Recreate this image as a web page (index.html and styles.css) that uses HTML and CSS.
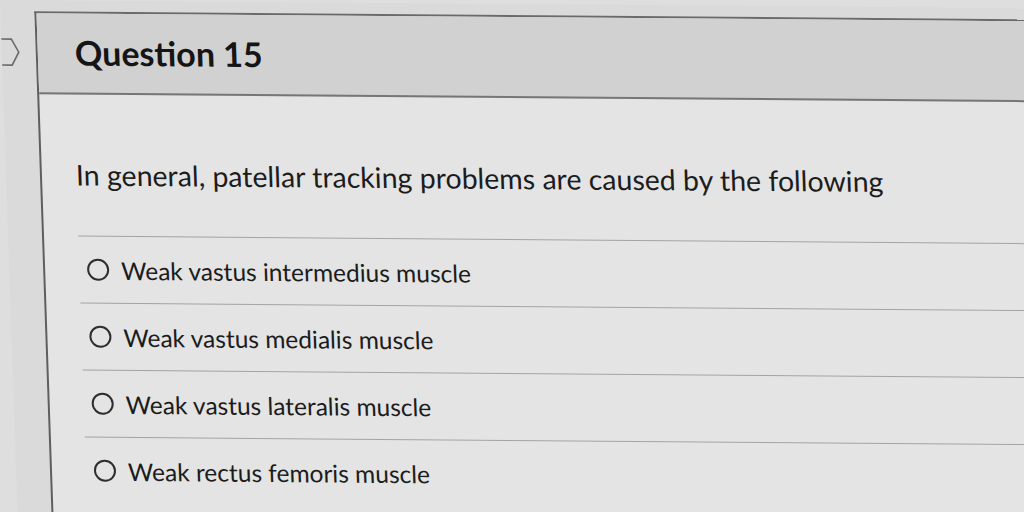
FILE: index.html
```html
<!DOCTYPE html>
<html lang="en">
<head>
<meta charset="utf-8">
<title>Question 15</title>
<link rel="stylesheet" href="styles.css">
</head>
<body>
<div class="page">
  <div class="gutter">
    <svg class="flag" width="20" height="32" viewBox="0 0 20 32" aria-hidden="true">
      <path d="M-4 2 H10 L17 15 L10 28 H-4" fill="none" stroke="#6b6b6b" stroke-width="1.6" stroke-linejoin="miter"/>
    </svg>
  </div>
  <section class="card">
    <header class="card-header">
      <h2 class="card-title">Question 15</h2>
    </header>
    <div class="card-body">
      <p class="question-text">In general, patellar tracking problems are caused by the following</p>
      <ul class="options">
        <li class="option"><span class="radio"></span><span class="option-label">Weak vastus intermedius muscle</span></li>
        <li class="option"><span class="radio"></span><span class="option-label">Weak vastus medialis muscle</span></li>
        <li class="option"><span class="radio"></span><span class="option-label">Weak vastus lateralis muscle</span></li>
        <li class="option"><span class="radio"></span><span class="option-label">Weak rectus femoris muscle</span></li>
      </ul>
    </div>
  </section>
</div>
</body>
</html>
```

FILE: styles.css
```css
html, body {
  margin: 0;
  padding: 0;
  height: 100%;
  overflow: hidden;
  background: #dedede;
  font-family: "Lato", "Open Sans", sans-serif;
  color: #1c1c1c;
}

.page {
  display: flex;
  width: 1120px;
  height: 600px;
  padding-top: 11px;
  box-sizing: border-box;
  background: #dadada;
  transform: matrix(1, 0.008, 0.034, 1, 0, 0);
  transform-origin: 0 0;
}

.gutter {
  flex: none;
  width: 34px;
}

.flag {
  display: block;
  margin-top: 26px;
}

.card {
  flex: 1;
  background: #e4e4e4;
  border-left: 2px solid #5e5e5e;
  border-top: 2px solid #6a6a6a;
}

.card-header {
  height: 81px;
  box-sizing: border-box;
  display: flex;
  align-items: center;
  padding: 0 0 2px 37px;
  background: #d1d1d1;
  border-bottom: 2px solid #767676;
}

.card-title {
  margin: 0;
  font-size: 34px;
  font-weight: 700;
  color: #151515;
}

.card-body {
  padding-left: 34px;
}

.question-text {
  margin: 0;
  padding: 62px 0 43px;
  font-size: 28.5px;
  line-height: 36px;
  color: #1c1c1c;
}

.options {
  list-style: none;
  margin: 0;
  padding: 0;
}

.option {
  height: 66px;
  display: flex;
  align-items: center;
  gap: 12px;
  padding-left: 8px;
  border-top: 1.5px solid #a3a3a3;
}

.radio {
  flex: none;
  width: 22px;
  height: 22px;
  box-sizing: border-box;
  border: 2px solid #2e2e2e;
  border-radius: 50%;
}

.option-label {
  font-size: 24.5px;
  color: #1c1c1c;
}
```
